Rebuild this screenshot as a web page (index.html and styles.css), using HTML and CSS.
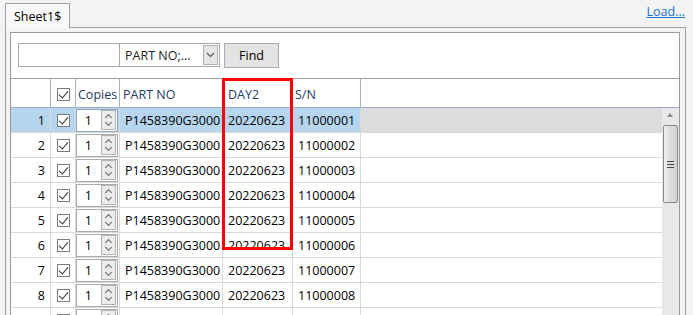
FILE: index.html
```html
<!DOCTYPE html>
<html lang="en">
<head>
  <meta charset="UTF-8">
  <title>Sheet1$</title>
  <link rel="stylesheet" href="styles.css">
</head>
<body>

  <div class="tabbar">
    <div class="tab">Sheet1$</div>
    <a class="load" href="#">Load...</a>
  </div>

  <div class="sheet">
    <div class="panel">

      <!-- search toolbar -->
      <div class="toolbar">
        <input class="search" type="text">
        <div class="combo">
          <span class="combo-text">PART NO;...</span>
          <span class="drop">
            <svg width="9" height="6" viewBox="0 0 9 6"><path d="M1 1 L4.5 4.5 L8 1" fill="none" stroke="#555" stroke-width="1.2"/></svg>
          </span>
        </div>
        <button class="find">Find</button>
      </div>

      <!-- data grid -->
      <div class="grid">
        <div class="row head">
          <div class="cell"></div>
          <div class="cell center"><span class="check on"></span></div>
          <div class="cell">Copies</div>
          <div class="cell">PART NO</div>
          <div class="cell">DAY2</div>
          <div class="cell">S/N</div>
          <div class="cell filler"></div>
        </div>
        <div class="body">
          <div class="rows" id="rows"></div>
          <div class="vscroll">
            <span class="arrow"></span>
            <div class="thumb"><span class="grip"></span></div>
          </div>
        </div>
        <div class="mark"></div>
      </div>

    </div>
  </div>

  <script>
    // build the grid rows (row 9 only peeks in at the bottom edge)
    const rows = document.getElementById('rows');
    for (let i = 1; i <= 9; i++) {
      const last = i === 9;
      const row = document.createElement('div');
      row.className = 'row' + (i === 1 ? ' selected' : '');
      row.innerHTML =
        '<div class="cell num">' + (last ? '' : i) + '</div>' +
        '<div class="cell center"><span class="check on"></span></div>' +
        '<div class="cell spin-cell"><div class="spin"><span class="spin-val">' + (last ? '' : '1') + '</span><span class="spin-btn"><i class="up"></i><i class="down"></i></span></div></div>' +
        '<div class="cell">' + (last ? '' : 'P1458390G3000') + '</div>' +
        '<div class="cell">' + (last ? '' : '20220623') + '</div>' +
        '<div class="cell">' + (last ? '' : '1100000' + i) + '</div>' +
        '<div class="cell filler"></div>';
      rows.appendChild(row);
    }
  </script>

</body>
</html>
```

FILE: styles.css
```css
* {
  margin: 0;
  padding: 0;
  box-sizing: border-box;
}

html, body {
  height: 315px;
  overflow: hidden;
}

body {
  font-family: 'Open Sans', 'Noto Sans', sans-serif;
  font-size: 12.5px;
  color: #000;
  background-color: #f3f3f3;
}

/* tab strip */
.tabbar {
  display: flex;
  justify-content: space-between;
  align-items: flex-start;
  height: 27px;
  padding: 3px 8px 0 5px;
}

.tab {
  height: 25px;
  width: 65px;
  border: 1px solid #a0a0a0;
  border-bottom: none;
  background-color: #f9f9f9;
  padding: 4px 0 0 8px;
  position: relative;
  z-index: 1;
}

.load {
  color: #1a70d0;
  text-decoration: underline;
  line-height: 14px;
  margin-top: 2px;
}

/* outer and inner panel */
.sheet {
  margin-left: 5px;
  width: 681px;
  height: 288px;
  border: 1px solid #a0a0a0;
  border-bottom: none;
  padding: 4px 5px 0 4px;
}

.panel {
  height: 100%;
  background-color: #fff;
  border: 1px solid #9a9a9a;
  border-bottom: none;
  display: flex;
  flex-direction: column;
  overflow: hidden;
}

.toolbar {
  flex-shrink: 0;
  height: 46px;
  border-bottom: 1px solid #a0a0a0;
  display: flex;
  align-items: flex-start;
  padding: 10px 0 0 7px;
}

.search {
  width: 102px;
  height: 24px;
  border: 1px solid #a8a8a8;
  outline: none;
}

.combo {
  width: 100px;
  height: 24px;
  border: 1px solid #a8a8a8;
  border-left: none;
  display: flex;
  align-items: center;
  justify-content: space-between;
  padding: 0 1px 0 5px;
  color: #1e1e1e;
}

.drop {
  width: 15px;
  height: 20px;
  background-color: #e6e6e6;
  border: 1px solid #b0b0b0;
  display: flex;
  align-items: center;
  justify-content: center;
}

.find {
  margin-left: 4px;
  width: 55px;
  height: 25px;
  font-family: inherit;
  font-size: 12.5px;
  background-color: #e3e3e3;
  border: 1px solid #adadad;
}

/* grid */
.grid {
  position: relative;
  flex: 1;
  min-height: 0;
  display: flex;
  flex-direction: column;
}

.row {
  display: grid;
  grid-template-columns: 40px 25px 44px 103px 70px 68px 1fr;
  height: 25px;
  flex-shrink: 0;
  border-bottom: 1px solid #d9d9d9;
}

.cell {
  border-right: 1px solid #d9d9d9;
  display: flex;
  align-items: center;
  padding-left: 5px;
  white-space: nowrap;
  overflow: hidden;
}

.cell.filler {
  border-right: none;
}

.head {
  height: 29px;
  border-bottom: 1px solid #9eabc0;
  color: #1e3a66;
}

.head .cell {
  border-right-color: #a6b2c4;
  padding: 3px 0 0 2px;
}

.head .cell:nth-child(4) {
  padding-left: 3px;
}

.head .cell:nth-child(5) {
  padding-left: 5px;
}

.center {
  justify-content: center;
  padding-left: 0;
}

.head .center {
  padding: 3px 0 0 0;
}

.num {
  justify-content: flex-end;
  padding: 0 5px 0 0;
}

.selected .cell {
  background-color: #b6d6f0;
}

.selected .cell.filler {
  background-color: #dcdcdc;
}

.check {
  width: 13px;
  height: 13px;
  border: 1px solid #7c7c7c;
  background-color: #fff;
  position: relative;
}

.check.on::after {
  content: "";
  position: absolute;
  left: 3px;
  top: 0px;
  width: 4px;
  height: 8px;
  border-right: 1.7px solid #2e2e2e;
  border-bottom: 1.7px solid #2e2e2e;
  transform: rotate(40deg);
}

.spin-cell {
  padding: 0;
}

.spin {
  width: 42px;
  height: 23px;
  border: 1px solid #ababab;
  background-color: #fff;
  display: flex;
  align-items: center;
  justify-content: flex-end;
  padding-right: 1px;
}

.selected .spin {
  border-color: #8fa6bf;
}

.spin-val {
  margin-right: 9px;
}

.spin-btn {
  width: 15px;
  height: 20px;
  border: 1px solid #b4b4b4;
  background-color: #ececec;
  display: flex;
  flex-direction: column;
  align-items: center;
  justify-content: space-around;
}

.spin-btn i {
  width: 5px;
  height: 5px;
  border-left: 1.2px solid #666;
  border-top: 1.2px solid #666;
}

.spin-btn .up {
  transform: translateY(2px) rotate(45deg);
}

.spin-btn .down {
  transform: translateY(-2px) rotate(225deg);
}

.body {
  flex: 1;
  min-height: 0;
  display: flex;
  overflow: hidden;
}

.rows {
  flex: 1;
}

.vscroll {
  width: 17px;
  background-color: #e8e8e8;
  position: relative;
}

.arrow {
  position: absolute;
  left: 5px;
  top: 5px;
  border-left: 3.5px solid transparent;
  border-right: 3.5px solid transparent;
  border-bottom: 4px solid #888;
}

.thumb {
  position: absolute;
  left: 1px;
  top: 17px;
  width: 15px;
  height: 78px;
  border: 1px solid #8a8a8a;
  border-radius: 2px;
  background: linear-gradient(to right, #f0f0f0, #dcdcdc 50%, #cfcfcf);
}

.grip {
  position: absolute;
  left: 3px;
  top: 35px;
  width: 7px;
  height: 7px;
  border-top: 1px solid #444;
  border-bottom: 1px solid #444;
}

.grip::after {
  content: "";
  position: absolute;
  left: 0;
  top: 2px;
  width: 7px;
  border-top: 1px solid #444;
}

/* highlight box over the DAY2 column */
.mark {
  position: absolute;
  left: 211px;
  top: -1px;
  width: 71px;
  height: 172px;
  border: 3px solid #f00;
}
```
